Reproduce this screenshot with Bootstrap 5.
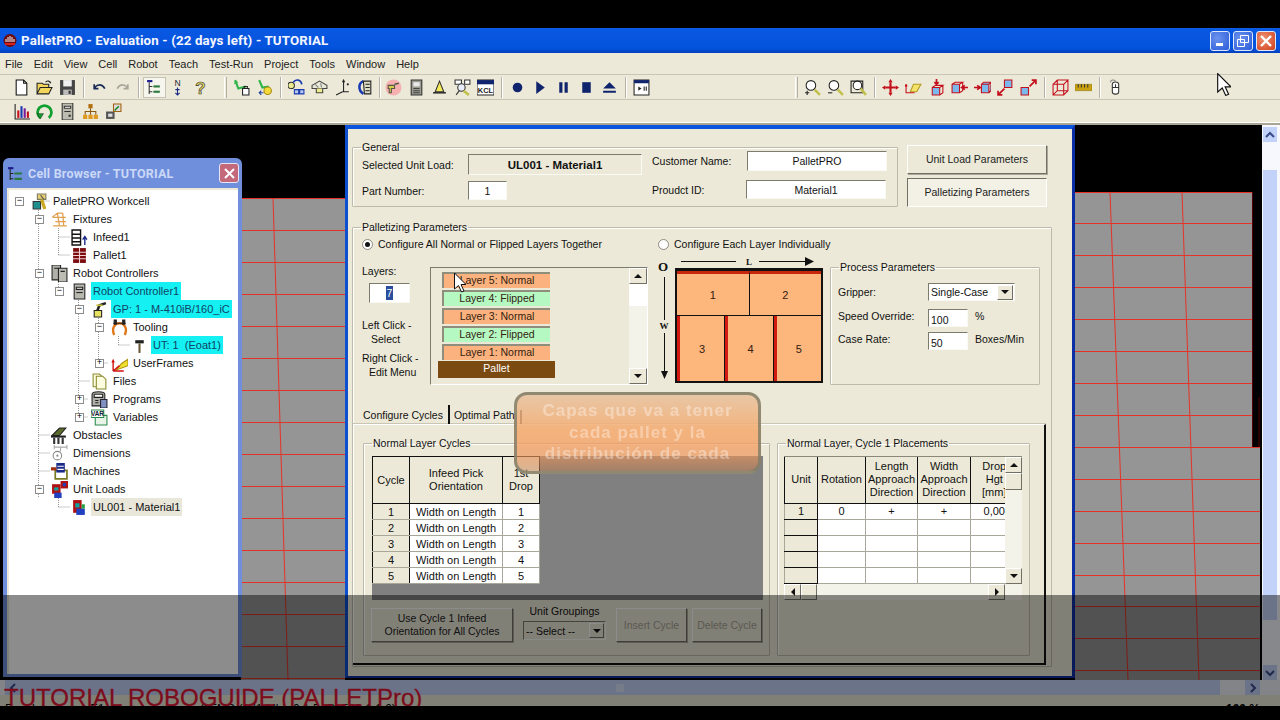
<!DOCTYPE html>
<html lang="en">
<head>
<meta charset="UTF-8">
<meta name="viewport" content="width=device-width, initial-scale=1.0">
<title>PalletPRO - TUTORIAL</title>
<link href="https://cdn.jsdelivr.net/npm/bootstrap@5.3.0/dist/css/bootstrap.min.css" rel="stylesheet">
<style>
body { margin: 0; width: 1280px; height: 720px; overflow: hidden; background: #000; color: #111; font: 11px/14px "Liberation Sans", Arial, sans-serif; }
.strip-top { height: 28px; background: #000; }
.strip-bot { height: 14px; background: #000; position: relative; z-index: 9; }
.app { height: 678px; position: relative; overflow: hidden; background: #ece9d8; }

/* title bar */
.tbar-main { height: 25px; background: linear-gradient(#0a5de6, #0a58e2 12%, #0453dd 80%, #0340bd); color: #f4f6ff; padding-left: 3px; }
.tbar-main .ttl { font: bold 13.300px "Roboto", "Liberation Sans", sans-serif; margin-left: 4px; letter-spacing: .15px; }
.wbtn-x { width: 20px; height: 20px; border: 1px solid #dfe8fb; border-radius: 3px; background: radial-gradient(circle at 35% 35%, #6b93ee, #2a5ad8); margin-left: 3px; }
.wbtn-x.cls { background: radial-gradient(circle at 35% 35%, #ee9070, #d0401c); }

/* menu and toolbars */
.menu-row { height: 21px; padding-left: 5px; gap: 11px; align-items: center; color: #222; }
.tool-row { height: 25px; border-top: 1px solid #c9c6b6; padding-left: 10px; align-items: center; }
.tool-row.last { height: 26px; border-bottom: 2px solid #a9a698; box-shadow: inset 0 -1px 0 #fff; }
.tb { width: 23px; height: 21px; display: flex; align-items: center; justify-content: center; flex: none; }
.tb svg { width: 17px; height: 17px; }
.tb.hot { background: #f6f5ee; border: 1px solid #c6c3b3; }
.tsep { width: 2px; height: 21px; margin: 0 3px 0 4px; border-left: 1px solid #b5b2a3; border-right: 1px solid #fff; flex: none; }
.tsep.n { margin: 0 1px 0 2px; }
.tgrip { width: 3px; height: 21px; margin: 0 3px 0 12px; border-left: 1px solid #fff; border-right: 1px solid #b5b2a3; flex: none; }
.tgrip.far { margin-left: 142px; }

/* client area */
.client { height: 555px; position: relative; background: #000; }
.wall { position: absolute; }
.wall-l { left: 241px; top: 73px; }
.wall-r { left: 1075px; top: 67px; }

.vscroll { position: absolute; left: 1262px; top: 0; width: 18px; height: 555px; background: #f6f8fe; }
.vs-part { position: absolute; left: 1px; width: 14px; background: #c3d2f8; display: flex; align-items: center; justify-content: center; }
.vs-up { top: 2px; height: 15px; }
.vs-th { top: 45px; height: 450px; }
.vs-dn { top: 540px; height: 15px; }
.hscroll { height: 15px; background: #eef0f6; padding-left: 5px; padding-right: 20px; }
.hs-btn { width: 15px; background: #c3d2f8; display: flex; align-items: center; justify-content: center; flex: none; }
.hs-th { width: 1200px; margin-right: 25px; background: #c3d2f8; display: flex; align-items: center; justify-content: center; flex: none; }
.status-row { height: 11px; padding: 7px 20px 0 5px; overflow: hidden; font-size: 12px; color: #000; }

/* cell browser */
.cellwin { position: absolute; left: 3px; top: 33px; width: 239px; height: 519px; background: #6f8fdc; border-radius: 6px 6px 0 0; padding: 0 4px 3px 4px; }
.cell-ttl { height: 30px; color: #cbd8f7; font: bold 12.500px "Roboto", "Liberation Sans", sans-serif; letter-spacing: .2px; }
.cell-cls { width: 20px; height: 20px; border: 1px solid #e6e6f4; border-radius: 3px; background: #c4697a; margin-right: -1px; }
.tree-box { height: 486px; background: #fff; border-left: 2px solid #ece9d8; border-top: 2px solid #ece9d8; padding-top: 2px; position: relative; }
.tree-lines { position: absolute; left: 0; top: 0; }
.tr { height: 18px; display: flex; align-items: center; position: relative; }
.l0 { padding-left: 6px; } .l1 { padding-left: 26px; } .l2 { padding-left: 46px; }
.l3 { padding-left: 66px; } .l4 { padding-left: 86px; } .l5 { padding-left: 106px; }
.xp { width: 9px; height: 9px; border: 1px solid #8c8c8c; background: #fff; margin-right: 7px; flex: none; font: 9px/7px "Liberation Mono", monospace; text-align: center; color: #000; }
.xp.none { border: 0; background: none; }
.tr svg { width: 17px; height: 17px; flex: none; }
.tr .lb { padding: 0 2px; margin-left: 3px; line-height: 18px; white-space: nowrap; }
.tr .sel { background: #15f0f2; color: #146; }
.tr .cur { background: #e9e7da; }

/* dialog */
.dlg { position: absolute; left: 345px; top: 0; width: 730px; height: 553px; background: #ece9d8; border-left: 3px solid #0c4fd0; border-right: 3px solid #0d2fa6; border-top: 4px solid #0a55dc; border-bottom: 2px solid #0d2fa6; padding-left: 4px; font-size: 10.500px; }
fieldset.gbox { border: 1px solid #bdbaa9; box-shadow: inset 1px 1px 0 #fff; border-radius: 1px; padding: 0; }
fieldset.gbox > legend { float: none; width: auto; font-size: 10.500px; line-height: 14px; margin: 0 0 0 8px; padding: 0 1px; }
.xp-btn { display: block; padding: 0; font-size: 10.500px; line-height: 13px; color: #222; background: #ece9d8; border: 1px solid; border-color: #fff #716f64 #716f64 #fff; border-radius: 0; box-shadow: 1px 1px 0 #aca899; }
.xp-btn.down { border-color: #716f64 #fff #fff #716f64; box-shadow: none; background: #f3f1e6; }
.xp-btn.off { color: #a5a294; }
.sunk { border: 1px solid; border-color: #7d7b6e #fafaf4 #fafaf4 #7d7b6e; background: #fff; display: flex; align-items: center; justify-content: center; }
.sunk.dry { background: #ece9d8; font-weight: bold; font-size: 11.500px; }
.top-flex { height: 78px; }
.row-gen { height: 67px; width: 546px; margin-top: 11px; flex: none; }
.f-lbl { width: 115px; padding-left: 9px; white-space: nowrap; flex: none; }
.f-lbl2 { width: 95px; white-space: nowrap; flex: none; }
.lf-col { width: 291px; }
.w174 { width: 174px; height: 21px; }
.w39 { width: 39px; height: 19px; }
.w140 { width: 140px; height: 20px; }
.w140b { width: 140px; height: 19px; margin-left: -1px; }
.gen-r1 { margin-top: -3px; }
.gen-g1 { margin-top: 6px; }
.gen-g2 { margin-top: 9px; }
.side-btns { margin: 16px 0 0 9px; width: 140px; }
.side-btn { width: 140px; height: 29px; margin-bottom: 4px; }
.pal-set { width: 700px; height: 447px; margin-top: 13px; }
.radio-row { height: 14px; margin-top: 3px; padding-left: 9px; align-items: center; }
.rad-a { width: 296px; flex: none; }
.radio-dot { width: 11px; height: 11px; border-radius: 50%; border: 1px solid #8e8c7f; background: #fff; margin-right: 5px; display: flex; align-items: center; justify-content: center; flex: none; }
.radio-dot i { width: 5px; height: 5px; border-radius: 50%; background: #111; }
.mid-row { height: 127px; margin-top: 7px; padding-left: 9px; }
.lay-col { width: 68px; flex: none; padding-top: 6px; }
.in-lay { width: 41px; height: 20px; margin: 5px 0 15px 7px; }
.in-lay b { background: #2a4e9c; color: #fff; font-weight: normal; padding: 0 1px; }
.ind-a { padding-left: 9px; } .ind-b { padding-left: 7px; } .mt-5p { margin-top: 5px; }
.listbox { width: 218px; height: 118px; margin-top: 9px; border: 1px solid; border-color: #7d7b6e #fff #fff #7d7b6e; display: flex; flex: none; }
.list-in { width: 199px; padding: 4px 0 0 11px; }
.lay { width: 108px; height: 16px; margin-bottom: 2px; line-height: 12px; text-align: center; background: #fbb27e; border-top: 2px solid #8f8d7c; border-left: 2px solid #8f8d7c; color: #332211; }
.lay.fl { background: #b6f8c2; }
.lay.pal { width: 117px; height: 17px; margin: -1px 0 0 -4px; background: #7b4a10; color: #fff; border: 0; line-height: 15px; }
.sbar { width: 18px; background: #f4f3ea; display: flex; flex-direction: column; flex: none; }
.sbtn { height: 16px; background: #ece9d8; border: 1px solid; border-color: #fff #716f64 #716f64 #fff; display: flex; align-items: center; justify-content: center; flex: none; }
.tri-u, .tri-d, .tri-l, .tri-r { width: 0; height: 0; border: 4px solid transparent; }
.tri-u { border-bottom-color: #111; border-top: 0; }
.tri-d { border-top-color: #111; border-bottom: 0; }
.tri-l { border-right-color: #111; border-left: 0; }
.tri-r { border-left-color: #111; border-right: 0; }
.sgap { flex: 1 1 auto; }
.sthumb { height: 22px; background: #fff; }
.ax-col { margin-left: 10px; width: 17px; flex: none; }
.pal-col { width: 148px; flex: none; margin-top: -2px; }
.pal-grid { width: 148px; height: 115px; border: 2px solid #111; border-top-width: 3px; background: #fdb67c; margin-top: 2px; }
.pal-row { display: flex; border-bottom: 1px solid #111; }
.pal-row.r1 { height: 45px; }
.pal-row.r2 { height: 65px; border-bottom: 0; }
.pal-cell { display: flex; align-items: center; justify-content: center; flex: 1 1 0; border-right: 1px solid #111; color: #33200f; font-size: 11px; }
.pal-cell:last-child { border-right: 0; }
.pal-row.r1 .pal-cell { border-top: 3px solid #c8260c; }
.pal-row.r2 .pal-cell { border-left: 3px solid #d01a10; }
.proc { width: 210px; height: 125px; margin: 2px 0 0 7px; flex: none; }
.pr-lbl { width: 97px; padding-left: 7px; flex: none; white-space: nowrap; }
.pr-up { margin-top: -4px; }
.pr-r { height: 18px; align-items: center; }
.pr-a { margin-top: 9px; } .pr-b { margin-top: 8px; } .pr-c { margin-top: 5px; }
.in-40 { width: 40px; height: 18px; justify-content: flex-start; padding: 3px 0 0 2px; margin-right: 7px; flex: none; }
.sel-b { width: 87px; height: 18px; justify-content: space-between; padding-left: 2px; }
.sel-b .sbtn { width: 16px; height: 15px; margin-right: 1px; }
.tab-row { height: 19px; margin: 20px 0 0 10px; align-items: center; }
.tab-div { width: 2px; height: 19px; background: #111; margin: 0 4px 0 5px; flex: none; }
.tab-div.sh { height: 14px; margin-top: 5px; }
.tab-panel { width: 693px; height: 241px; border-top: 1px solid #fff; border-right: 2px solid #111; border-bottom: 2px solid #111; padding: 11px 0 0 10px; gap: 7px; box-shadow: 0 -1px 0 #c9c6b6; }
.lgrp { width: 407px; height: 220px; flex: none; }
.rgrp { width: 253px; height: 220px; flex: none; }
.g-area { width: 391px; height: 144px; margin: 6px 0 0 8px; background: #808080; }
table.wtbl { table-layout: fixed; border-collapse: collapse; background: #fff; text-align: center; font-size: 11px; }
table.wtbl td, table.wtbl th { padding: 0; font-weight: normal; height: 16px; line-height: 14px; border: 1px solid #a9a79a; }
.cyc { width: 167px; }
.cyc th { background: #ece9d8; border-color: #111 !important; height: 47px !important; line-height: 13px !important; }
.cyc { border: 1px solid #111; }
.cyc td:first-child { background: #ece9d8; border-color: #a9a79a #111 #a9a79a #111; }
.btn-row { margin: 8px 0 0 7px; }
.btn-use { width: 142px; height: 34px; flex: none; }
.btn-ins { width: 71px; height: 34px; flex: none; }
.btn-del { width: 70px; height: 34px; flex: none; margin-left: 5px; }
.ugr { width: 83px; margin: -4px 10px 0 10px; flex: none; text-align: center; white-space: nowrap; }
.sel-u { width: 83px; height: 19px; justify-content: space-between; padding-left: 2px; margin-top: 3px; background: #ece9d8; }
.sel-u .sbtn { width: 15px; height: 15px; margin-right: 1px; }
.p-area { width: 238px; height: 144px; margin: 6px 0 0 6px; border-top: 1px solid #8a8878; background: #f4f3ea; }
.p-left { width: 221px; flex: none; overflow: hidden; }
.plc { width: 233px; }
.plc th { background: #ece9d8; height: 46px !important; line-height: 13px !important; border-color: #111 !important; border-top: 0 !important; overflow: hidden; }
.plc th:last-child { border-right: 0 !important; white-space: nowrap; }
.plc td:first-child { background: #ece9d8; border-bottom: 1px solid #111; border-right: 1px solid #111; }
.plc td:last-child { border-right: 0; }
.p-hs { height: 16px; width: 221px; }
.p-hs .sbtn { width: 17px; flex: none; }
.thumb-h { width: 16px; height: 16px; border: 1px solid; border-color: #fff #716f64 #716f64 #fff; background: #ece9d8; flex: none; }
.p-vs { width: 17px; flex: none; display: flex; flex-direction: column; height: 127px; }
.p-vs .vth { height: 17px; background: #ece9d8; border: 1px solid; border-color: #fff #716f64 #716f64 #fff; }

/* overlays */
.callout { position: absolute; left: 514px; top: 364px; width: 247px; height: 82px; border: 3px solid rgba(125,125,105,.8); border-radius: 13px; background: linear-gradient(rgba(232,192,156,.85), rgba(245,168,108,.85) 48%, rgba(240,152,92,.72) 74%, rgba(196,128,82,.5)); text-align: center; color: rgba(255,255,255,.36); font: bold 17px/21.500px "Liberation Sans", Arial, sans-serif; letter-spacing: 1px; padding-top: 5px; filter: blur(.6px); z-index: 3; white-space: nowrap; }
.band { position: absolute; left: 0; top: 567px; width: 1280px; height: 111px; background: rgba(0,0,0,.45); z-index: 4; }
.tut { position: absolute; left: 4px; top: 657px; white-space: nowrap; color: #7c0c1c; font: 24px/26px "Liberation Sans", Arial, sans-serif; -webkit-text-stroke: .3px #7c0c1c; z-index: 5; }
.cursor { position: absolute; z-index: 6; }
.cur-a { left: 1217px; top: 45px; }
.cur-b { left: 454px; top: 244px; }
</style>
</head>
<body>
<svg width="0" height="0" class="position-absolute">
  <symbol id="new" viewBox="0 0 16 16"><path d="M3 1h7l3 3v11H3z" fill="#fff" stroke="#111"/><path d="M10 1v3h3" fill="none" stroke="#111"/></symbol>
  <symbol id="open" viewBox="0 0 16 16"><path d="M1 14V4h5l1 1h5v3H4l-3 6h11l3-6H5" fill="#f2d65c" stroke="#222"/><path d="M9 3c2-2 4-1 5 1" fill="none" stroke="#222"/></symbol>
  <symbol id="save" viewBox="0 0 16 16"><path d="M1 1h14v14H1z" fill="#444"/><path d="M4 1h8v6H4z" fill="#eee"/><path d="M4 10h8v5H4z" fill="#bbb"/><path d="M9 11h2v3H9z" fill="#333"/></symbol>
  <symbol id="undo" viewBox="0 0 16 16"><path d="M3 5v4h4M3 9c2-4 7-5 10 0" fill="none" stroke="#1b2a55" stroke-width="1.600"/></symbol>
  <symbol id="redo" viewBox="0 0 16 16"><path d="M13 5v4H9M13 9c-2-4-7-5-10 0" fill="none" stroke="#aaa79a" stroke-width="1.600"/></symbol>
  <symbol id="tree" viewBox="0 0 16 16"><path d="M3 3v11M3 7h3M3 12h3" fill="none" stroke="#333"/><path d="M1 1h5v2H1z" fill="#1a1a8c"/><path d="M7 6h6v2H7z" fill="#2a7a3c"/><path d="M7 11h6v2H7z" fill="#2a7a3c"/></symbol>
  <symbol id="grlock" viewBox="0 0 16 16"><path d="M2 1l3 8 7-2" fill="none" stroke="#2fb54a" stroke-width="2"/><path d="M1 5l1-4 3 2z" fill="#2fb54a"/><path d="M9 9h6v6H9z" fill="#fff" stroke="#222"/><path d="M10.500 9V7h3v2" fill="none" stroke="#222"/></symbol>
  <symbol id="grstar" viewBox="0 0 16 16"><path d="M3 1l3 7 6-1" fill="none" stroke="#2fb54a" stroke-width="2"/><circle cx="11" cy="11" r="3.500" fill="#f4d93a" stroke="#a88a10"/><path d="M3 13h4M5 11l-2 2 2 2" fill="none" stroke="#2040a0"/></symbol>
  <symbol id="rbt" viewBox="0 0 16 16"><circle cx="3" cy="6" r="3" fill="#ecec90" stroke="#333"/><path d="M5 3c2-3 7-3 8 2" fill="none" stroke="#1a3ab0" stroke-width="1.600"/><path d="M6 10h4v4H6zM11 10h4v4h-4z" fill="#b8c8ec" stroke="#1a3ab0"/></symbol>
  <symbol id="board" viewBox="0 0 16 16"><path d="M1 6l7-4 7 4v3H1z" fill="#e8e8d8" stroke="#444"/><path d="M5 9v4h6V9" fill="#eeec8c" stroke="#444"/><path d="M4 5l3 3M9 4l1 4" stroke="#888"/></symbol>
  <symbol id="axes" viewBox="0 0 16 16"><path d="M9 12V2M8 3l1-2 1 2M8 12l-6 3M8 12h6" fill="none" stroke="#222"/><circle cx="13" cy="5" r="1" fill="#222"/></symbol>
  <symbol id="cyc" viewBox="0 0 16 16"><path d="M6 2C1 4 1 11 6 14" fill="none" stroke="#1a3ab0" stroke-width="2.400"/><path d="M6 2h7v12H7z" fill="#dcdcc4" stroke="#222"/><path d="M8 5h4M8 8h4M8 11h4" stroke="#222"/></symbol>
  <symbol id="robo" viewBox="0 0 16 16"><circle cx="8" cy="8" r="7.500" fill="#f6b0b0"/><path d="M3 6h6v3H6v4H4V9H3z" fill="#d8cc50" stroke="#554"/><path d="M9 5l4-1" stroke="#554" stroke-width="1.500"/></symbol>
  <symbol id="pend" viewBox="0 0 16 16"><path d="M3 1h10v14H3z" fill="#9a9a90" stroke="#333"/><path d="M5 3h6v4H5z" fill="#e8e8e8"/><path d="M5 9h6M5 11h6M5 13h6" stroke="#444"/></symbol>
  <symbol id="bell" viewBox="0 0 16 16"><path d="M8 2l4 10H4z" fill="#f6ea5c" stroke="#333"/><path d="M2 13h12" stroke="#333" stroke-width="1.500"/></symbol>
  <symbol id="frmz" viewBox="0 0 16 16"><path d="M1 1h6v4H1z" fill="#fff" stroke="#333"/><path d="M10 1h5v4h-5z" fill="#fff" stroke="#333"/><circle cx="7" cy="8" r="3.500" fill="#e8ecf8" stroke="#333"/><path d="M9 11l5 4" stroke="#c2c04c" stroke-width="2.400"/><path d="M2 15l3-4" stroke="#333"/></symbol>
  <symbol id="rec" viewBox="0 0 16 16"><circle cx="8" cy="8" r="4.500" fill="#10246e"/></symbol>
  <symbol id="play" viewBox="0 0 16 16"><path d="M4 2l8 6-8 6z" fill="#10246e"/></symbol>
  <symbol id="pau" viewBox="0 0 16 16"><path d="M4 3h3v10H4zM9 3h3v10H9z" fill="#10246e"/></symbol>
  <symbol id="stp" viewBox="0 0 16 16"><path d="M4 3h8v10H4z" fill="#10246e"/></symbol>
  <symbol id="ejc" viewBox="0 0 16 16"><path d="M8 3l6 6H2zM2 11h12v2H2z" fill="#10246e"/></symbol>
  <symbol id="win" viewBox="0 0 16 16"><path d="M1 1h14v14H1z" fill="#fff" stroke="#222"/><path d="M1 1h14v3H1z" fill="#10246e"/><path d="M5 7l3 2-3 2zM10 7h1v4h-1zM12 7h1v4h-1z" fill="#222"/></symbol>
  <symbol id="zin" viewBox="0 0 16 16"><circle cx="6.500" cy="6" r="4.500" fill="#fff" stroke="#222"/><path d="M10 10l5 5" stroke="#c2c04c" stroke-width="2.400"/><path d="M1 13h4M3 11v4" stroke="#222"/></symbol>
  <symbol id="zout" viewBox="0 0 16 16"><circle cx="6.500" cy="6" r="4.500" fill="#fff" stroke="#222"/><path d="M10 10l5 5" stroke="#c2c04c" stroke-width="2.400"/><path d="M1 13h4" stroke="#222"/></symbol>
  <symbol id="zfit" viewBox="0 0 16 16"><path d="M1 2h11v11H1z" fill="none" stroke="#222"/><circle cx="7" cy="6" r="4" fill="#fff" stroke="#222"/><path d="M10 9l5 6" stroke="#c2c04c" stroke-width="2.400"/></symbol>
  <symbol id="pan" viewBox="0 0 16 16"><path d="M8 0l2 3H6zM8 16l-2-3h4zM0 8l3-2v4zM16 8l-3 2V6z" fill="#c4101c"/><path d="M8 3v10M3 8h10" stroke="#c4101c" stroke-width="2"/></symbol>
  <symbol id="plane" viewBox="0 0 16 16"><path d="M5 12l3-7h7l-4 7z" fill="#f4e36a" stroke="#b49a20"/><path d="M1 5v8h8M1 5l-1 2M1 5l1 2" fill="none" stroke="#c4101c"/></symbol>
  <symbol id="cub" viewBox="0 0 16 16"><path d="M4 8h7v7H4z" fill="#7bb8ec"/><path d="M4 8h7v7H4zM4 8l3-2h7l-3 2M14 6v7l-3 2" fill="none" stroke="#c4101c"/><path d="M8 0v5M6 3l2 2 2-2" fill="none" stroke="#c4101c" stroke-width="1.600"/></symbol>
  <symbol id="cubr" viewBox="0 0 16 16"><path d="M1 5h7v8H1z" fill="#7bb8ec"/><path d="M1 5h7v8H1zM1 5l3-2h7L8 5M11 3v8l-3 2" fill="none" stroke="#c4101c"/><path d="M10 8h6M13 6l-3 2 3 2" fill="none" stroke="#c4101c" stroke-width="1.600"/></symbol>
  <symbol id="cubl" viewBox="0 0 16 16"><path d="M7 5h7v8H7zM7 5l2-2h7l-2 2M16 3v8l-2 2" fill="#7bb8ec" stroke="#c4101c"/><path d="M0 8h6M3 6l3 2-3 2" fill="none" stroke="#c4101c" stroke-width="1.600"/></symbol>
  <symbol id="cubd" viewBox="0 0 16 16"><path d="M7 1h7v7H7z" fill="#7bb8ec" stroke="#c4101c"/><path d="M1 15l6-6M1 11v4h4" fill="none" stroke="#c4101c" stroke-width="1.600"/></symbol>
  <symbol id="cubu" viewBox="0 0 16 16"><path d="M1 8h7v7H1z" fill="#7bb8ec" stroke="#c4101c"/><path d="M15 1L9 7M15 5V1h-4" fill="none" stroke="#c4101c" stroke-width="1.600"/></symbol>
  <symbol id="cubb" viewBox="0 0 16 16"><path d="M1 5h10v10H1zM1 5l4-4h10L11 5M15 1v10l-4 4M1 15l4-4h10M5 1v10" fill="none" stroke="#c4101c"/></symbol>
  <symbol id="rule" viewBox="0 0 16 16"><path d="M0 5h16v6H0z" fill="#c8a010" stroke="#8a7010" stroke-width=".5"/><path d="M3 5v3M6 5v3M9 5v3M12 5v3" stroke="#333"/></symbol>
  <symbol id="mouse" viewBox="0 0 16 16"><path d="M5 5c0-3 6-3 6 0v7c0 3-6 3-6 0zM5 8h6M8 5v3" fill="#fff" stroke="#333"/><path d="M8 2C6 0 4 1 3 3" fill="none" stroke="#888"/></symbol>
  <symbol id="bars" viewBox="0 0 16 16"><path d="M2 1v14h14" fill="none" stroke="#222"/><path d="M4 7h2v7H4z" fill="#c4101c"/><path d="M7 3h2v11H7z" fill="#1a3ab0"/><path d="M10 5h2v9h-2z" fill="#7a1a9c"/><path d="M13 8h2v6h-2z" fill="#c4101c"/></symbol>
  <symbol id="ring" viewBox="0 0 16 16"><path d="M4 14A6.500 6.500 0 1 1 12 14" fill="none" stroke="#10a030" stroke-width="2.600"/><path d="M1 10h6l-3 5z" fill="#10a030" stroke="#222" stroke-width=".5"/></symbol>
  <symbol id="ctl" viewBox="0 0 16 16"><path d="M3 0h10v16H3z" fill="#bcbcb0" stroke="#333"/><path d="M5 3h6v2H5z" fill="#fff" stroke="#333"/><path d="M5 8h6" stroke="#333"/><path d="M9 11h2v2H9z" fill="#333"/></symbol>
  <symbol id="hier" viewBox="0 0 16 16"><path d="M6 1h4v4H6z" fill="#b07010"/><path d="M1 11h4v4H1zM6 11h4v4H6zM11 11h4v4h-4z" fill="#e09a20"/><path d="M8 5v3M3 11V8h10v3M8 8v3" fill="none" stroke="#8a5a10"/></symbol>
  <symbol id="cfg" viewBox="0 0 16 16"><path d="M1 8h8v7H1z" fill="#555"/><path d="M3 10h4v3H3z" fill="#ddd"/><path d="M8 1h7v7H8z" fill="#ddd" stroke="#a06010"/><path d="M9 7l4-4" stroke="#10801c" stroke-width="1.400"/></symbol>

  <symbol id="t-cell" viewBox="0 0 16 16"><path d="M2 8h7v7H2z" fill="#1f8f8f" stroke="#333"/><path d="M6 1h8v5H6z" fill="#e8d070" stroke="#776"/><path d="M10 6l3 9" stroke="#c9a820" stroke-width="3"/><path d="M9 2l3 4" stroke="#555"/></symbol>
  <symbol id="t-fix" viewBox="0 0 16 16"><path d="M2 6h12M4 10h10M2 14h13M6 2l2 12M11 2l1 12M1 6l5-4 5 0" fill="none" stroke="#e0a050" stroke-width="1.200"/></symbol>
  <symbol id="t-infeed" viewBox="0 0 16 16"><path d="M1 1h8v14H1zM1 5h8M1 8.500h8M1 12h8" fill="#fff" stroke="#111" stroke-width="1.300"/><path d="M13 15V8M11 10l2-3 2 3" fill="none" stroke="#1a2a88" stroke-width="1.300"/></symbol>
  <symbol id="t-pal" viewBox="0 0 16 16"><path d="M2 1h12v14H2z" fill="#7a0c10"/><path d="M2 5h12M2 8h12M2 11h12M8 1v14" stroke="#f0d0d0"/></symbol>
  <symbol id="t-ctls" viewBox="0 0 16 16"><path d="M1 0h8v14H1z" fill="#b0b0a8" stroke="#222"/><path d="M7 3h8v13H7z" fill="#bcbcb4" stroke="#222"/><path d="M3 3h4M9 6h4" stroke="#222"/></symbol>
  <symbol id="t-ctl" viewBox="0 0 16 16"><path d="M3 1h10v14H3z" fill="#b8b8b0" stroke="#222"/><path d="M5 4h6v2H5z" fill="#fff" stroke="#222"/><path d="M5 9h6" stroke="#222"/></symbol>
  <symbol id="t-rob" viewBox="0 0 16 16"><path d="M3 9h7v6H3z" fill="#e8e060" stroke="#222"/><path d="M6 9l2-5 6-2" fill="none" stroke="#222" stroke-width="2.400"/><path d="M5 4h6" stroke="#c8c040" stroke-width="1.600"/></symbol>
  <symbol id="t-tool" viewBox="0 0 16 16"><path d="M3 15C0 8 4 4 8 4s8 4 5 11" fill="none" stroke="#e07818" stroke-width="2.200"/><path d="M3 1h2v4H3zM11 1h2v4h-2zM2 4h12" fill="#222" stroke="#222"/></symbol>
  <symbol id="t-ut" viewBox="0 0 16 16"><path d="M4 3h8v3H4z" fill="#222"/><path d="M7 6h2v9H7z" fill="#6a5a3a"/></symbol>
  <symbol id="t-ufr" viewBox="0 0 16 16"><path d="M5 14l5-6 6-4v6z" fill="#f0e030" stroke="#b09010"/><path d="M2 15V6M2 15h10M2 15l6-5M1 7l1-2 1 2" fill="none" stroke="#d01010" stroke-width="1.300"/></symbol>
  <symbol id="t-file" viewBox="0 0 16 16"><path d="M2 1h6l3 3v9H2z" fill="#fdfde0" stroke="#8a8a30"/><path d="M5 3h6l3 3v9H5z" fill="#fdfde0" stroke="#8a8a30"/></symbol>
  <symbol id="t-prog" viewBox="0 0 16 16"><path d="M1 3c0-3 12-3 12 0v11H1z" fill="#b0b0a8" stroke="#222"/><path d="M3 3h8v3H3z" fill="#fff" stroke="#222"/><path d="M9 8h6v8H9z" fill="#8090c0" stroke="#223"/><path d="M4 9h3M4 11h3" stroke="#222"/></symbol>
  <symbol id="t-obs" viewBox="0 0 16 16"><path d="M1 8l7-7h6L8 8z" fill="#5a6a2a" stroke="#222"/><path d="M0 8h14v2H0z" fill="#222"/><path d="M2 10h2v6H2zM6 10h2v6H6zM10 10h2v6h-2z" fill="#333"/></symbol>
  <symbol id="t-dim" viewBox="0 0 16 16"><circle cx="6" cy="10" r="4" fill="none" stroke="#888"/><circle cx="6" cy="10" r="1" fill="#888"/><path d="M3 2h12M3 0v4M15 0v4M9 2v4" stroke="#aaa"/></symbol>
  <symbol id="t-mach" viewBox="0 0 16 16"><path d="M4 7h11v8H4z" fill="#fff" stroke="#7a7a20" stroke-width="1.600"/><path d="M5 0h8v9H5z" fill="#1a2a88"/><path d="M6 3h6M6 6h6" stroke="#fff"/><path d="M0 4h5v3H0z" fill="#a03010"/></symbol>
  <symbol id="t-uls" viewBox="0 0 16 16"><path d="M9 0h7v7H9z" fill="#b01010"/><path d="M11 2h3v3h-3z" fill="#2040c0"/><path d="M1 3h8v9H1z" fill="#b01010"/><path d="M3 6h4v3H3z" fill="#10a0a0"/><path d="M3 11h7v5H3z" fill="#2040c0"/></symbol>
  <symbol id="t-ul" viewBox="0 0 16 16"><path d="M2 1h8v12H2z" fill="#b01010"/><path d="M4 4h4v4H4z" fill="#10a0a0"/><path d="M5 9h8v6H5z" fill="#2040c0"/><path d="M10 5h3v4h-3z" fill="#20a040"/></symbol>
  <symbol id="t-hd" viewBox="0 0 16 16"><path d="M1 2h5v2H1z" fill="#1a1a8c"/><path d="M3 4v10M3 8h3M3 13h3" fill="none" stroke="#222"/><path d="M7 7h7v2H7zM7 12h7v2H7z" fill="#2a7a3c"/></symbol>
</svg>

<div class="strip-top"></div>
<div class="app">
  <div class="tbar-main d-flex align-items-center">
    <svg width="14" height="15" viewBox="0 0 14 15"><circle cx="7" cy="7.500" r="6.500" fill="#6a0c10"/><path d="M3 9V6M5 9V4M7 9V3M9 9V4M11 9V6" stroke="#fff"/><path d="M2 10h10v2H2z" fill="#d8201c"/></svg>
    <span class="ttl">PalletPRO - Evaluation - (22 days left) - TUTORIAL</span>
    <div class="ms-auto d-flex me-1">
      <div class="wbtn-x d-flex align-items-end justify-content-center pb-1"><svg width="8" height="3"><path d="M0 0h7v3H0z" fill="#fff"/></svg></div>
      <div class="wbtn-x d-flex align-items-center justify-content-center"><svg width="12" height="12"><path d="M3.500.5h8v7h-8zM.5 4.500h7v7h-7z" fill="none" stroke="#fff"/></svg></div>
      <div class="wbtn-x cls d-flex align-items-center justify-content-center"><svg width="12" height="12"><path d="M1 1l10 10M11 1L1 11" stroke="#fff" stroke-width="2.400"/></svg></div>
    </div>
  </div>
  <div class="d-flex menu-row">
    <span>File</span><span>Edit</span><span>View</span><span>Cell</span><span>Robot</span><span>Teach</span><span>Test-Run</span><span>Project</span><span>Tools</span><span>Window</span><span>Help</span>
  </div>
  <div class="d-flex tool-row">
    <span class="tb"><svg><use href="#new"/></svg></span><span class="tb"><svg><use href="#open"/></svg></span><span class="tb"><svg><use href="#save"/></svg></span>
    <span class="tsep"></span>
    <span class="tb"><svg><use href="#undo"/></svg></span><span class="tb"><svg><use href="#redo"/></svg></span>
    <span class="tsep"></span>
    <span class="tb hot"><svg><use href="#tree"/></svg></span>
    <span class="tb"><svg viewBox="0 0 16 16"><text x="8" y="7" font-size="8" text-anchor="middle" fill="#223" font-family="Liberation Sans">N</text><path d="M8 8v7M6 10h4M6 13l2 2 2-2" fill="none" stroke="#1a2a88"/></svg></span>
    <span class="tb"><svg viewBox="0 0 16 16"><text x="8" y="14" font-size="16" font-weight="bold" text-anchor="middle" fill="#e8d85c" stroke="#333" stroke-width=".6" font-family="Liberation Sans">?</text></svg></span>
    <span class="tgrip"></span>
    <span class="tb"><svg><use href="#grlock"/></svg></span><span class="tb"><svg><use href="#grstar"/></svg></span>
    <span class="tsep"></span>
    <span class="tb"><svg><use href="#rbt"/></svg></span><span class="tb"><svg><use href="#board"/></svg></span><span class="tb"><svg><use href="#axes"/></svg></span><span class="tb"><svg><use href="#cyc"/></svg></span>
    <span class="tsep n"></span>
    <span class="tb"><svg><use href="#robo"/></svg></span><span class="tb"><svg><use href="#pend"/></svg></span><span class="tb"><svg><use href="#bell"/></svg></span><span class="tb"><svg><use href="#frmz"/></svg></span>
    <span class="tb"><svg viewBox="0 0 16 16"><path d="M0 1h16v14H0z" fill="#fff" stroke="#222"/><path d="M0 1h16v4H0z" fill="#10246e"/><text x="8" y="13" font-size="7" font-weight="bold" text-anchor="middle" fill="#222" font-family="Liberation Sans">KCL</text></svg></span>
    <span class="tsep"></span>
    <span class="tb"><svg><use href="#rec"/></svg></span><span class="tb"><svg><use href="#play"/></svg></span><span class="tb"><svg><use href="#pau"/></svg></span><span class="tb"><svg><use href="#stp"/></svg></span><span class="tb"><svg><use href="#ejc"/></svg></span>
    <span class="tsep"></span>
    <span class="tb"><svg><use href="#win"/></svg></span>
    <span class="tgrip far"></span>
    <span class="tb"><svg><use href="#zin"/></svg></span><span class="tb"><svg><use href="#zout"/></svg></span><span class="tb"><svg><use href="#zfit"/></svg></span>
    <span class="tsep"></span>
    <span class="tb"><svg><use href="#pan"/></svg></span><span class="tb"><svg><use href="#plane"/></svg></span><span class="tb"><svg><use href="#cub"/></svg></span><span class="tb"><svg><use href="#cubr"/></svg></span><span class="tb"><svg><use href="#cubl"/></svg></span><span class="tb"><svg><use href="#cubd"/></svg></span><span class="tb"><svg><use href="#cubu"/></svg></span>
    <span class="tsep"></span>
    <span class="tb"><svg><use href="#cubb"/></svg></span><span class="tb"><svg><use href="#rule"/></svg></span>
    <span class="tsep"></span>
    <span class="tb"><svg><use href="#mouse"/></svg></span>
  </div>
  <div class="d-flex tool-row last">
    <span class="tb"><svg><use href="#bars"/></svg></span><span class="tb"><svg><use href="#ring"/></svg></span><span class="tb"><svg><use href="#ctl"/></svg></span><span class="tb"><svg><use href="#hier"/></svg></span><span class="tb"><svg><use href="#cfg"/></svg></span>
  </div>

  <div class="client">
    <svg class="wall wall-l" width="104" height="482"><path d="M0 0h104v482H0z" fill="#959595"/>
      <path d="M0 .5h104M0 32.500h104M0 64.500h104M0 96.500h104M0 128.500h104M0 160.500h104M0 192.500h104M0 224.500h104M0 256.500h104M0 288.500h104M0 320.500h104M0 352.500h104M0 384.500h104M0 416.500h104M0 448.500h104M0 480.500h104M32 0l15 482" fill="none" stroke="#e4342a"/></svg>
    <svg class="wall wall-r" width="185" height="488"><path d="M0 0h177v255h8v233H0z" fill="#959595"/><path d="M177.500 0v255M184 205v50" stroke="#500" fill="none"/>
      <path d="M0 .5h177M0 31.500h177M0 63.500h177M0 95.500h177M0 127.500h177M0 159.500h177M0 191.500h177M0 223.500h177M0 255.500h185M0 287.500h185M0 319.500h185M0 351.500h185M0 383.500h185M0 414.500h185M0 446.500h185M0 478.500h185M35 0l18 488M107 0l17 488" fill="none" stroke="#e4342a"/></svg>

    <div class="cellwin">
      <div class="cell-ttl d-flex align-items-center">
        <svg width="17" height="17" class="me-1 flex-none"><use href="#t-hd"/></svg>
        <span>Cell Browser - TUTORIAL</span>
        <span class="cell-cls ms-auto d-flex align-items-center justify-content-center"><svg width="11" height="11"><path d="M1 1l9 9M10 1l-9 9" stroke="#fff" stroke-width="2"/></svg></span>
      </div>
      <div class="tree-box">
        <svg class="tree-lines" width="140" height="330"><path d="M29.500 20v288M49.500 38v28M49.500 92v10M69.500 110v118M89.500 128v46M109.500 146v10M29.500 11h12M49.500 47h12M49.500 65h12M69.500 191h12M69.500 209h10M69.500 227h10M109.500 155h12M89.500 173h10M29.500 245h12M29.500 263h12M29.500 281h12M49.500 308v10M49.500 317h12" fill="none" stroke="#999" stroke-dasharray="1 1"/></svg>
        <div class="tr l0"><span class="xp">−</span><svg><use href="#t-cell"/></svg><span class="lb">PalletPRO Workcell</span></div>
        <div class="tr l1"><span class="xp">−</span><svg><use href="#t-fix"/></svg><span class="lb">Fixtures</span></div>
        <div class="tr l2"><span class="xp none"></span><svg><use href="#t-infeed"/></svg><span class="lb">Infeed1</span></div>
        <div class="tr l2"><span class="xp none"></span><svg><use href="#t-pal"/></svg><span class="lb">Pallet1</span></div>
        <div class="tr l1"><span class="xp">−</span><svg><use href="#t-ctls"/></svg><span class="lb">Robot Controllers</span></div>
        <div class="tr l2"><span class="xp">−</span><svg><use href="#t-ctl"/></svg><span class="lb sel">Robot Controller1</span></div>
        <div class="tr l3"><span class="xp">−</span><svg><use href="#t-rob"/></svg><span class="lb sel">GP: 1 - M-410iB/160_iC</span></div>
        <div class="tr l4"><span class="xp">−</span><svg><use href="#t-tool"/></svg><span class="lb">Tooling</span></div>
        <div class="tr l5"><span class="xp none"></span><svg><use href="#t-ut"/></svg><span class="lb sel">UT: 1&nbsp; (Eoat1)</span></div>
        <div class="tr l4"><span class="xp">+</span><svg><use href="#t-ufr"/></svg><span class="lb">UserFrames</span></div>
        <div class="tr l3"><span class="xp none"></span><svg><use href="#t-file"/></svg><span class="lb">Files</span></div>
        <div class="tr l3"><span class="xp">+</span><svg><use href="#t-prog"/></svg><span class="lb">Programs</span></div>
        <div class="tr l3"><span class="xp">+</span><svg viewBox="0 0 16 16"><path d="M4 6h11v9H4z" fill="#e8f4e8" stroke="#2a8a4a"/><path d="M0 1h12v7H0z" fill="#fff" stroke="#2a8a4a"/><text x="6" y="7" font-size="6" font-weight="bold" text-anchor="middle" fill="#123" font-family="Liberation Sans">VAR</text></svg><span class="lb">Variables</span></div>
        <div class="tr l1"><span class="xp none"></span><svg><use href="#t-obs"/></svg><span class="lb">Obstacles</span></div>
        <div class="tr l1"><span class="xp none"></span><svg><use href="#t-dim"/></svg><span class="lb">Dimensions</span></div>
        <div class="tr l1"><span class="xp none"></span><svg><use href="#t-mach"/></svg><span class="lb">Machines</span></div>
        <div class="tr l1"><span class="xp">−</span><svg><use href="#t-uls"/></svg><span class="lb">Unit Loads</span></div>
        <div class="tr l2"><span class="xp none"></span><svg><use href="#t-ul"/></svg><span class="lb cur">UL001 - Material1</span></div>
      </div>
    </div>

    <div class="dlg">
      <div class="d-flex top-flex">
        <fieldset class="gbox row-gen">
          <legend>General</legend>
          <div class="d-flex">
            <div class="lf-col">
              <div class="d-flex align-items-center"><span class="f-lbl">Selected Unit Load:</span><div class="sunk dry w174">UL001 - Material1</div></div>
              <div class="d-flex align-items-center gen-g1"><span class="f-lbl">Part Number:</span><div class="sunk w39">1</div></div>
            </div>
            <div class="gen-r1 flex-grow-1 ps-2">
              <div class="d-flex align-items-center"><span class="f-lbl2">Customer Name:</span><div class="sunk w140">PalletPRO</div></div>
              <div class="d-flex align-items-center gen-g2"><span class="f-lbl2">Proudct ID:</span><div class="sunk w140b">Material1</div></div>
            </div>
          </div>
        </fieldset>
        <div class="side-btns">
          <button class="btn xp-btn side-btn">Unit Load Parameters</button>
          <button class="btn xp-btn down side-btn">Palletizing Parameters</button>
        </div>
      </div>

      <fieldset class="gbox pal-set">
        <legend>Palletizing Parameters</legend>
        <div class="d-flex radio-row">
          <div class="d-flex align-items-center rad-a"><span class="radio-dot"><i></i></span><span>Configure All Normal or Flipped Layers Together</span></div>
          <div class="d-flex align-items-center"><span class="radio-dot"></span><span>Configure Each Layer Individually</span></div>
        </div>
        <div class="d-flex mid-row">
          <div class="lay-col">
            <div>Layers:</div>
            <div class="sunk in-lay"><b>7</b></div>
            <div>Left Click -</div>
            <div class="ind-a">Select</div>
            <div class="mt-5p">Right Click -</div>
            <div class="ind-b">Edit Menu</div>
          </div>
          <div class="listbox">
            <div class="list-in">
              <div class="lay">Layer 5: Normal</div>
              <div class="lay fl">Layer 4: Flipped</div>
              <div class="lay">Layer 3: Normal</div>
              <div class="lay fl">Layer 2: Flipped</div>
              <div class="lay">Layer 1: Normal</div>
              <div class="lay pal">Pallet</div>
            </div>
            <div class="sbar">
              <div class="sbtn"><span class="tri-u"></span></div>
              <div class="sthumb"></div>
              <div class="sgap"></div>
              <div class="sbtn"><span class="tri-d"></span></div>
            </div>
          </div>
          <div class="ax-col">
            <svg width="17" height="127"><text x="5" y="13" font-size="13" font-weight="bold" text-anchor="middle" font-family="Liberation Serif" fill="#111">O</text><path d="M6.500 19v43M6.500 75v38" stroke="#111"/><text x="6" y="71" font-size="9" font-weight="bold" text-anchor="middle" font-family="Liberation Serif" fill="#111">W</text><path d="M3 113h7l-3.500 8z" fill="#111"/></svg>
          </div>
          <div class="pal-col">
            <svg width="148" height="10" class="d-block"><path d="M6 5.500h55M84 5.500h46" stroke="#111"/><text x="74" y="9" font-size="9" font-weight="bold" text-anchor="middle" font-family="Liberation Serif" fill="#111">L</text><path d="M130 1v9l9-4.500z" fill="#111"/></svg>
            <div class="pal-grid">
              <div class="pal-row r1"><div class="pal-cell">1</div><div class="pal-cell">2</div></div>
              <div class="pal-row r2"><div class="pal-cell">3</div><div class="pal-cell">4</div><div class="pal-cell">5</div></div>
            </div>
          </div>
          <fieldset class="gbox proc">
            <legend>Process Parameters</legend>
            <div class="d-flex pr-r pr-a"><span class="pr-lbl">Gripper:</span><div class="sunk sel-b"><span>Single-Case</span><span class="sbtn"><span class="tri-d"></span></span></div></div>
            <div class="d-flex pr-r pr-b"><span class="pr-lbl pr-up">Speed Override:</span><div class="sunk in-40">100</div><span class="pr-up">%</span></div>
            <div class="d-flex pr-r pr-c"><span class="pr-lbl pr-up">Case Rate:</span><div class="sunk in-40">50</div><span class="pr-up">Boxes/Min</span></div>
          </fieldset>
        </div>

        <div class="d-flex tab-row">
          <span>Configure Cycles</span><span class="tab-div"></span><span>Optimal Path</span><span class="tab-div sh"></span>
        </div>
        <div class="d-flex tab-panel">
          <fieldset class="gbox lgrp">
            <legend>Normal Layer Cycles</legend>
            <div class="g-area">
              <table class="wtbl cyc">
                <colgroup><col width="37"><col width="93"><col width="37"></colgroup>
                <tr><th>Cycle</th><th>Infeed Pick<br>Orientation</th><th>1st<br>Drop</th></tr>
                <tr><td>1</td><td>Width on Length</td><td>1</td></tr>
                <tr><td>2</td><td>Width on Length</td><td>2</td></tr>
                <tr><td>3</td><td>Width on Length</td><td>3</td></tr>
                <tr><td>4</td><td>Width on Length</td><td>4</td></tr>
                <tr><td>5</td><td>Width on Length</td><td>5</td></tr>
              </table>
            </div>
            <div class="d-flex btn-row">
              <button class="btn xp-btn btn-use">Use Cycle 1 Infeed<br>Orientation for All Cycles</button>
              <div class="ugr">
                <div>Unit Groupings</div>
                <div class="sunk sel-u"><span>-- Select --</span><span class="sbtn"><span class="tri-d"></span></span></div>
              </div>
              <button class="btn xp-btn off btn-ins">Insert Cycle</button>
              <button class="btn xp-btn off btn-del">Delete Cycle</button>
            </div>
          </fieldset>
          <fieldset class="gbox rgrp">
            <legend>Normal Layer, Cycle 1 Placements</legend>
            <div class="d-flex p-area">
              <div class="p-left">
                <table class="wtbl plc">
                  <colgroup><col width="33"><col width="48"><col width="52"><col width="53"><col width="47"></colgroup>
                  <tr><th>Unit</th><th>Rotation</th><th>Length<br>Approach<br>Direction</th><th>Width<br>Approach<br>Direction</th><th>Drop<br>Hgt<br>[mm]</th></tr>
                  <tr><td>1</td><td>0</td><td>+</td><td>+</td><td>0,00</td></tr>
                  <tr><td></td><td></td><td></td><td></td><td></td></tr>
                  <tr><td></td><td></td><td></td><td></td><td></td></tr>
                  <tr><td></td><td></td><td></td><td></td><td></td></tr>
                  <tr><td></td><td></td><td></td><td></td><td></td></tr>
                </table>
                <div class="d-flex p-hs">
                  <div class="sbtn"><span class="tri-l"></span></div>
                  <div class="thumb-h"></div>
                  <div class="sgap"></div>
                  <div class="sbtn"><span class="tri-r"></span></div>
                </div>
              </div>
              <div class="p-vs">
                <div class="sbtn"><span class="tri-u"></span></div>
                <div class="vth"></div>
                <div class="sgap"></div>
                <div class="sbtn"><span class="tri-d"></span></div>
              </div>
            </div>
          </fieldset>
        </div>
      </fieldset>
    </div>

    <div class="vscroll">
      <div class="vs-part vs-up"><svg width="10" height="8"><path d="M1 6l4-4 4 4" fill="none" stroke="#3a4c8c" stroke-width="2"/></svg></div>
      <div class="vs-part vs-th"></div>
      <div class="vs-part vs-dn"><svg width="10" height="8"><path d="M1 2l4 4 4-4" fill="none" stroke="#3a4c8c" stroke-width="2"/></svg></div>
    </div>
  </div>

  <div class="d-flex hscroll">
    <div class="hs-btn"><svg width="8" height="10"><path d="M6 1L2 5l4 4" fill="none" stroke="#3a4c8c" stroke-width="2"/></svg></div>
    <div class="hs-th"><svg width="8" height="8"><path d="M1 0v8M3 0v8M5 0v8M7 0v8" stroke="#eef2fc"/></svg></div>
    <div class="hs-btn"><svg width="8" height="10"><path d="M2 1l4 4-4 4" fill="none" stroke="#3a4c8c" stroke-width="2"/></svg></div>
  </div>
  <div class="d-flex status-row">
    <span>For Help, press F1</span>
    <span class="ms-5 ps-5">0.5MB (171 Mb), 0,1,5 (PL512 1,1,0)</span>
    <span class="ms-auto fw-bold">100 %</span>
  </div>

  <div class="callout">Capas que va a tener<br>cada pallet y la<br>distribución de cada</div>
  <div class="band"></div>
  <div class="tut">TUTORIAL ROBOGUIDE (PALLETPro)</div>
  <svg class="cursor cur-a" width="14" height="23" viewBox="0 0 12 20"><path d="M.5.500v16l4-3.500 3 6.500 2.500-1-3-6.500h5z" fill="#fff" stroke="#111"/></svg>
  <svg class="cursor cur-b" width="12" height="21" viewBox="0 0 12 20"><path d="M.5.500v16l4-3.500 3 6.500 2.500-1-3-6.500h5z" fill="#fff" stroke="#111"/></svg>
</div>
<div class="strip-bot"></div>
</body>
</html>
